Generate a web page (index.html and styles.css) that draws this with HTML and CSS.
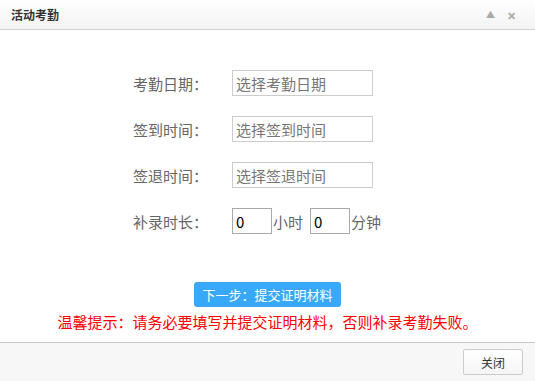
FILE: index.html
```html
<!DOCTYPE html>
<html lang="zh-CN">

<head>
    <meta charset="UTF-8">
    <meta name="viewport" content="width=device-width, initial-scale=1.0">
    <link rel="stylesheet" href="styles.css">
    <title>活动考勤</title>
</head>

<body>
    <section class="dialog">
        <div class="title-bar">
            <h1>活动考勤</h1>
            <div class="tools">
                <span class="tool-min">&#9650;</span>
                <span class="tool-close">&#10005;</span>
            </div>
        </div>
        <div class="content">
            <div class="row">
                <label>考勤日期：</label>
                <input class="wide" type="text" placeholder="选择考勤日期">
            </div>
            <div class="row">
                <label>签到时间：</label>
                <input class="wide" type="text" placeholder="选择签到时间">
            </div>
            <div class="row">
                <label>签退时间：</label>
                <input class="wide" type="text" placeholder="选择签退时间">
            </div>
            <div class="row">
                <label>补录时长：</label>
                <input class="short" type="text" value="0">
                <span class="unit">小时</span>
                <input class="short second" type="text" value="0">
                <span class="unit">分钟</span>
            </div>
            <div class="next">
                <button>下一步：提交证明材料</button>
            </div>
            <p class="tip">温馨提示：请务必要填写并提交证明材料，否则补录考勤失败。</p>
        </div>
        <div class="footer">
            <button class="close">关闭</button>
        </div>
    </section>
</body>

</html>
```

FILE: styles.css
```css
* {
    margin: 0;
    padding: 0;
    box-sizing: border-box;
}

body {
    font-family: "Noto Sans CJK SC", "Noto Sans", sans-serif;
    background: #fff;
}

.dialog {
    width: 535px;
    height: 381px;
    display: flex;
    flex-direction: column;
}

.title-bar {
    height: 30px;
    display: flex;
    justify-content: space-between;
    align-items: center;
    padding: 0 19px 0 11px;
    background: linear-gradient(#fff, #f3f3f3);
    border-bottom: 1px solid #d3d3d3;
}

.title-bar h1 {
    font-size: 12px;
    font-weight: bold;
    color: #333;
}

.tools {
    display: flex;
    align-items: center;
    gap: 12px;
    color: #aaa;
}

.tool-min {
    font-size: 9px;
}

.tool-close {
    font-size: 11px;
    font-weight: bold;
}

.content {
    flex: 1;
    padding-top: 40px;
}

.row {
    display: flex;
    align-items: center;
    height: 26px;
    margin-bottom: 20px;
    padding-left: 133px;
    font-size: 15px;
    color: #666;
}

.row label {
    width: 99px;
}

.row input {
    height: 26px;
    border: 1px solid #ccc;
    font-family: inherit;
    font-size: 15px;
    padding: 0 3px;
    outline: none;
}

.row input::placeholder {
    color: #777;
}

.wide {
    width: 141px;
}

.short {
    width: 40px;
    color: #000;
    border-color: #a9a9a9 !important;
}

.second {
    margin-left: 7px;
}

.unit {
    margin-left: 1px;
}

.next {
    display: flex;
    justify-content: center;
    margin-top: 48px;
}

.next button {
    height: 25px;
    padding: 0 8px;
    border: none;
    border-radius: 3px;
    background: #38a9f8;
    color: #fff;
    font-family: inherit;
    font-size: 13px;
}

.tip {
    text-align: center;
    color: #f00;
    font-size: 15px;
    margin-top: 3px;
    line-height: 24px;
}

.footer {
    height: 39px;
    border-top: 1px solid #c8c8c8;
    background: #f7f7f7;
    display: flex;
    justify-content: flex-end;
    align-items: center;
    padding-right: 12px;
}

.close {
    width: 60px;
    height: 26px;
    border: 1px solid #ccc;
    border-radius: 2px;
    background: linear-gradient(#fff, #f5f5f5);
    color: #333;
    font-family: inherit;
    font-size: 12px;
}
```
